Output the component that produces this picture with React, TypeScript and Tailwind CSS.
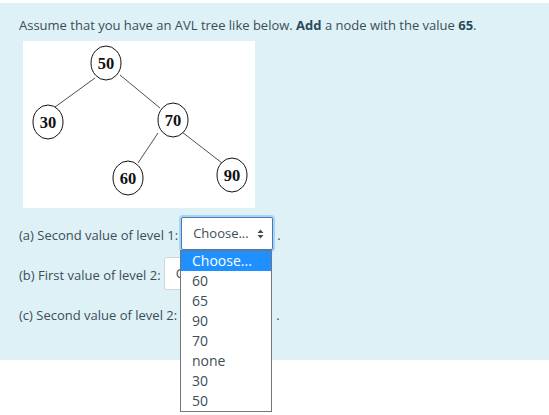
import React from 'react';

const font = { fontFamily: '"Open Sans", "Noto Sans", sans-serif' };

const nodes = [
  { v: '50', x: 83, y: 22 },
  { v: '30', x: 25, y: 81 },
  { v: '70', x: 150, y: 79 },
  { v: '60', x: 105, y: 137 },
  { v: '90', x: 209, y: 134 },
];

const edges = [
  [72, 37, 32, 66],
  [97, 34, 137, 67],
  [135, 92, 115, 122],
  [159, 91, 199, 122],
];

function Tree() {
  return (
    <div className="ml-[4px] mt-[7px] h-[167px] w-[232px] bg-white">
      <svg width="232" height="167" viewBox="0 0 232 167">
        {edges.map((e, i) => (
          <line key={i} x1={e[0]} y1={e[1]} x2={e[2]} y2={e[3]} stroke="#222" strokeWidth="0.8" />
        ))}
        {nodes.map((n) => (
          <g key={n.v}>
            <ellipse cx={n.x} cy={n.y} rx="15" ry="17" fill="white" stroke="#111" strokeWidth="1" />
            <text
              x={n.x}
              y={n.y + 5.5}
              textAnchor="middle"
              fontFamily='"Liberation Serif", serif'
              fontWeight="bold"
              fontSize="16.5"
              fill="#111"
            >
              {n.v}
            </text>
          </g>
        ))}
      </svg>
    </div>
  );
}

const options = ['Choose...', '60', '65', '90', '70', 'none', '30', '50'];

export default function App() {
  return (
    <div className="relative flex h-[415px] w-[549px] flex-col bg-white pt-[3px]" style={font}>
      <div className="h-[357px] bg-[#def1f7] pl-[19px] pt-[14px] text-[13px] text-[#3d4d56]">
        <p className="leading-[17px]">
          Assume that you have an AVL tree like below. <b className="font-bold text-[#2b4a5a]">Add</b> a node with the
          value <b className="font-bold text-[#2b4a5a]">65</b>.
        </p>
        <Tree />

        <div className="mt-[9px] flex items-center">
          <span className="pt-[4px]">(a) Second value of level 1:</span>
          <div className="ml-[3px] flex h-[33px] w-[92px] items-center justify-between rounded-[2px] border border-[#3b7ec4] bg-white pl-[11px] pr-[8px] shadow-[0_0_0_2px_rgba(120,170,220,0.45)]">
            <span>Choose...</span>
            <svg width="7" height="10" viewBox="0 0 7 10">
              <path d="M3.5 0.5 L6.5 4 L0.5 4 Z M0.5 6 L6.5 6 L3.5 9.5 Z" fill="#3d4d56" />
            </svg>
          </div>
          <span className="ml-[4px] pt-[4px]">.</span>
        </div>

        <div className="mt-[7px] flex items-center">
          <span className="pt-[4px]">(b) First value of level 2:</span>
          <div className="ml-[3px] flex h-[33px] w-[92px] items-center rounded-[2px] border border-[#cfd6da] bg-white pl-[11px]">
            <span>Choose...</span>
          </div>
          <span className="ml-[4px] pt-[4px]">.</span>
        </div>

        <div className="mt-[7px] flex items-center">
          <span className="pt-[4px]">(c) Second value of level 2:</span>
          <div className="ml-[3px] flex h-[33px] w-[92px] items-center rounded-[2px] border border-[#cfd6da] bg-white pl-[11px]">
            <span>Choose...</span>
          </div>
          <span className="ml-[4px] pt-[4px]">.</span>
        </div>
      </div>

      <ul className="absolute left-[180px] top-[250px] w-[92px] border border-[#767676] bg-white text-[14px] text-[#3d4d56]">
        {options.map((o, i) => (
          <li
            key={o}
            className={
              i === 0
                ? 'h-[20px] bg-[#1e90ff] pl-[11px] leading-[20px] text-white'
                : 'h-[20px] pl-[11px] leading-[20px]'
            }
          >
            {o}
          </li>
        ))}
      </ul>
    </div>
  );
}
